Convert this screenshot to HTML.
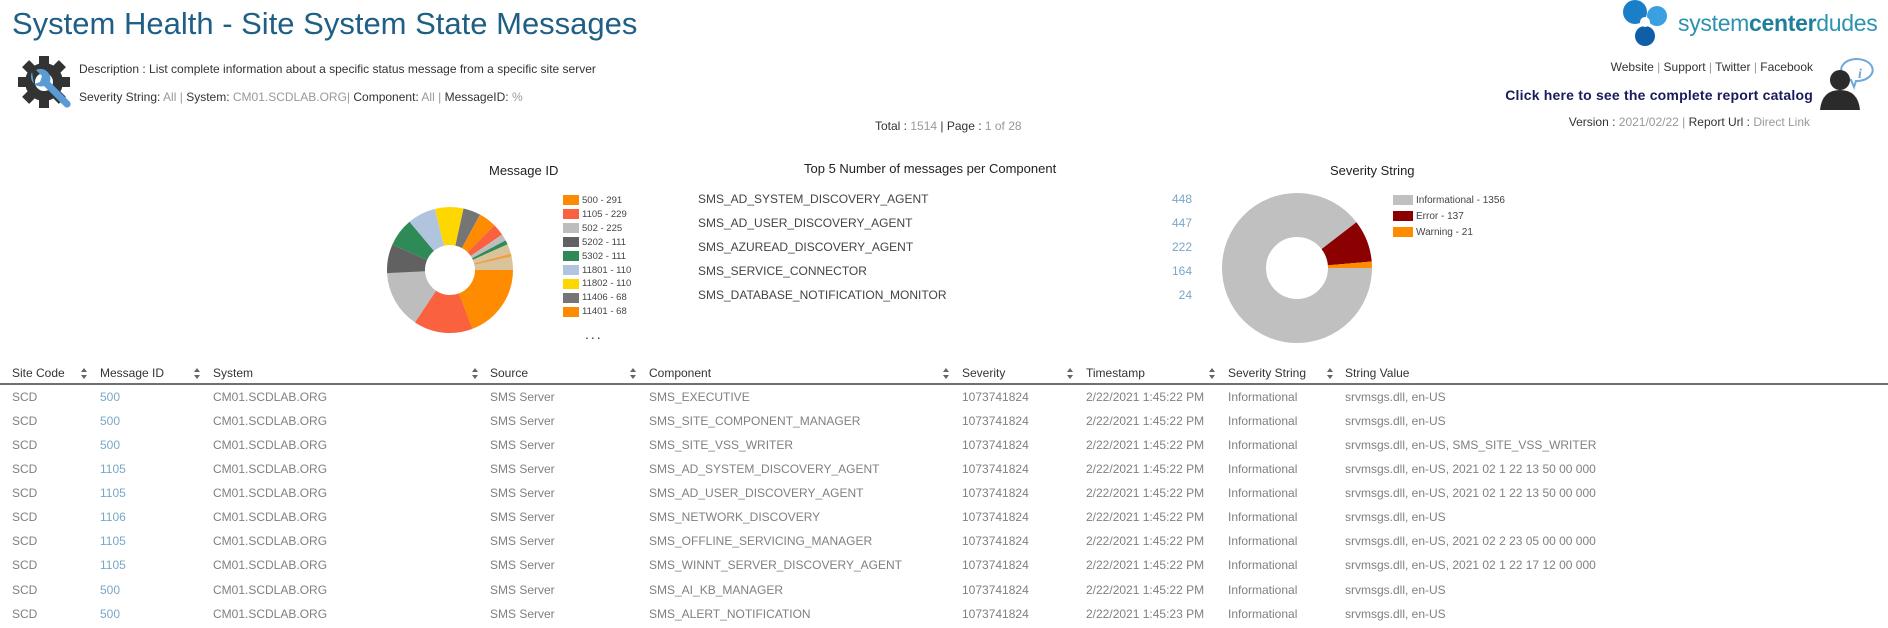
<!DOCTYPE html>
<html><head><meta charset="utf-8"><style>
*{margin:0;padding:0;box-sizing:border-box}
body{width:1888px;height:628px;background:#fff;font-family:"Liberation Sans",sans-serif;color:#444;position:relative;overflow:hidden;font-size:12px}
.a{position:absolute;white-space:nowrap}
.g{color:#999}
.lk{color:#7aa7c7}
.hd{color:#333;font-size:12px}
.si{position:absolute;width:7px;height:11px}
.si:before,.si:after{content:"";position:absolute;left:0;border-left:3.5px solid transparent;border-right:3.5px solid transparent}
.si:before{top:0;border-bottom:4px solid #666}
.si:after{bottom:0;border-top:4px solid #666}
.leg{position:absolute;font-size:9.5px;color:#444}
.leg i{display:inline-block;width:16px;height:10px;vertical-align:middle;margin-right:3px}
</style></head><body>
<div class="a" style="left:12px;top:6px;font-size:31px;color:#1f5f86">System Health - Site System State Messages</div>

<svg class="a" style="left:18px;top:56px" width="56" height="54" viewBox="0 0 56 54">
<g fill="#333" transform="translate(26,26)">
<circle r="19"/>
<g id="t"><rect x="-5" y="-26" width="10" height="10"/></g>
<use href="#t" transform="rotate(45)"/><use href="#t" transform="rotate(90)"/><use href="#t" transform="rotate(135)"/><use href="#t" transform="rotate(180)"/><use href="#t" transform="rotate(225)"/><use href="#t" transform="rotate(270)"/><use href="#t" transform="rotate(315)"/>
<circle r="9" fill="#fff"/>
</g>
<path d="M14 16 a10 10 0 0 0 12 14 L46 50 a3 3 0 0 0 6 -4 L32 26 a10 10 0 0 0 -14 -12 l6 6 -2 6 -6 2z" fill="#5b9bd5"/>
</svg>
<div class="a" style="left:79px;top:62px;font-size:12px;color:#333">Description : List complete information about a specific status message from a specific site server</div>
<div class="a" style="left:79px;top:90px;font-size:12px;color:#333">Severity String: <span class="g">All</span> <span class="g">|</span> System: <span class="g">CM01.SCDLAB.ORG</span><span class="g">|</span> Component: <span class="g">All</span> <span class="g">|</span> MessageID: <span class="g">%</span></div>
<div class="a" style="left:875px;top:119px;font-size:12px;color:#333">Total : <span class="g">1514</span> | Page : <span class="g">1 of 28</span></div>

<svg class="a" style="left:1617px;top:0" width="60" height="48">
<circle cx="18" cy="12" r="12" fill="#1b7fc8"/><circle cx="40" cy="16" r="10" fill="#3aa0e0"/><circle cx="28" cy="36" r="10" fill="#0e5fa8"/><circle cx="28" cy="22" r="5" fill="#fff"/>
</svg>
<div class="a" style="left:1678px;top:10px;font-size:23px;color:#2a93b0;letter-spacing:-0.3px">system<b style="color:#1d7f9c">center</b>dudes</div>
<div class="a" style="right:75px;top:60px;font-size:12px;color:#333">Website <span class="g">|</span> Support <span class="g">|</span> Twitter <span class="g">|</span> Facebook</div>
<div class="a" style="right:75px;top:87px;font-size:14px;color:#1a1a5e;font-weight:bold;letter-spacing:0.2px">Click here to see the complete report catalog</div>
<div class="a" style="right:78px;top:115px;font-size:12px;color:#333">Version : <span class="g">2021/02/22</span> <span class="g">|</span> Report Url : <span class="g">Direct Link</span></div>
<svg class="a" style="left:1820px;top:56px" width="58" height="56">
<path d="M30 4 a16 11 0 1 1 6 21 l-2 6 -3 -7 a16 11 0 0 1 -1 -20z" fill="none" stroke="#6fa8d8" stroke-width="2"/>
<text x="38" y="22" font-size="14" font-style="italic" font-weight="bold" fill="#6fa8d8" font-family="Liberation Serif">i</text>
<circle cx="20" cy="24" r="10" fill="#2b2b2b"/><path d="M0 54 q2 -20 20 -20 q18 0 20 20z" fill="#2b2b2b"/>
</svg>

<div class="a" style="left:489px;top:163px;font-size:13px;color:#222">Message ID</div>
<svg class="a" style="left:380px;top:200px" width="140" height="140" viewBox="0 0 140 140">
<g transform="translate(70,70)" fill="none" stroke-width="38">
<circle r="44" stroke="#ff8c00" stroke-dasharray="53.1 300" transform="rotate(0)"/>
<circle r="44" stroke="#f9613f" stroke-dasharray="41.9 300" transform="rotate(69.2)"/>
<circle r="44" stroke="#bdbdbd" stroke-dasharray="41.1 300" transform="rotate(123.7)"/>
<circle r="44" stroke="#616161" stroke-dasharray="20.3 300" transform="rotate(177.2)"/>
<circle r="44" stroke="#2e8b57" stroke-dasharray="20.3 300" transform="rotate(203.6)"/>
<circle r="44" stroke="#b0c4de" stroke-dasharray="20.1 300" transform="rotate(230)"/>
<circle r="44" stroke="#ffd700" stroke-dasharray="20.1 300" transform="rotate(256.2)"/>
<circle r="44" stroke="#757575" stroke-dasharray="12.4 300" transform="rotate(282.4)"/>
<circle r="44" stroke="#ff8c00" stroke-dasharray="12.4 300" transform="rotate(298.6)"/>
<circle r="44" stroke="#f9613f" stroke-dasharray="8.5 300" transform="rotate(314.8)"/>
<circle r="44" stroke="#bdbdbd" stroke-dasharray="4.6 300" transform="rotate(326)"/>
<circle r="44" stroke="#2e8b57" stroke-dasharray="3.1 300" transform="rotate(332)"/>
<circle r="44" stroke="#d8c39a" stroke-dasharray="18.4 300" transform="rotate(336)"/>
<circle r="44" stroke="#f0a040" stroke-dasharray="2 300" transform="rotate(345)"/>
</g></svg>
<div class="leg" style="left:563px;top:194px;line-height:13.9px">
<div><i style="background:#ff8c00"></i>500 - 291</div>
<div><i style="background:#f9613f"></i>1105 - 229</div>
<div><i style="background:#bdbdbd"></i>502 - 225</div>
<div><i style="background:#616161"></i>5202 - 111</div>
<div><i style="background:#2e8b57"></i>5302 - 111</div>
<div><i style="background:#b0c4de"></i>11801 - 110</div>
<div><i style="background:#ffd700"></i>11802 - 110</div>
<div><i style="background:#757575"></i>11406 - 68</div>
<div><i style="background:#ff8c00"></i>11401 - 68</div>
</div>
<div class="a" style="left:585px;top:326px;font-size:14px;color:#333;letter-spacing:2px">...</div>

<div class="a" style="left:804px;top:161px;font-size:13px;color:#222">Top 5 Number of messages per Component</div>
<div class="a" style="left:698px;top:187px;font-size:12px;color:#444;line-height:24px">SMS_AD_SYSTEM_DISCOVERY_AGENT<br>SMS_AD_USER_DISCOVERY_AGENT<br>SMS_AZUREAD_DISCOVERY_AGENT<br>SMS_SERVICE_CONNECTOR<br>SMS_DATABASE_NOTIFICATION_MONITOR</div>
<div class="a lk" style="right:696px;top:187px;font-size:12px;line-height:24px;text-align:right">448<br>447<br>222<br>164<br>24</div>

<div class="a" style="left:1330px;top:163px;font-size:13px;color:#222">Severity String</div>
<svg class="a" style="left:1220px;top:191px" width="154" height="154" viewBox="0 0 154 154">
<g transform="translate(77,77)" fill="none" stroke-width="44">
<circle r="53" stroke="#c0c0c0" stroke-dasharray="298.2 400"/>
<circle r="53" stroke="#8b0000" stroke-dasharray="30.2 400" transform="rotate(322.4)"/>
<circle r="53" stroke="#ff8c00" stroke-dasharray="4.7 400" transform="rotate(355)"/>
</g></svg>
<div class="leg" style="left:1393px;top:193px;line-height:15.8px;font-size:10px">
<div><i style="background:#c0c0c0;width:20px"></i>Informational - 1356</div>
<div><i style="background:#8b0000;width:20px"></i>Error - 137</div>
<div><i style="background:#ff8c00;width:20px"></i>Warning - 21</div>
</div>

<div class="a hd" style="left:12px;top:366px">Site Code</div><div class="si" style="left:81px;top:368px"></div>
<div class="a hd" style="left:100px;top:366px">Message ID</div><div class="si" style="left:194px;top:368px"></div>
<div class="a hd" style="left:213px;top:366px">System</div><div class="si" style="left:472px;top:368px"></div>
<div class="a hd" style="left:490px;top:366px">Source</div><div class="si" style="left:630px;top:368px"></div>
<div class="a hd" style="left:649px;top:366px">Component</div><div class="si" style="left:943px;top:368px"></div>
<div class="a hd" style="left:962px;top:366px">Severity</div><div class="si" style="left:1067px;top:368px"></div>
<div class="a hd" style="left:1086px;top:366px">Timestamp</div><div class="si" style="left:1209px;top:368px"></div>
<div class="a hd" style="left:1228px;top:366px">Severity String</div><div class="si" style="left:1327px;top:368px"></div>
<div class="a hd" style="left:1345px;top:366px">String Value</div>
<div class="a" style="left:0;top:383px;width:1888px;height:2px;background:#6b7378"></div>

<div class="a" style="left:0;top:385px;width:1888px;line-height:24.07px;color:#808080;font-size:12px">
<div class="a" style="left:12px">SCD<br>SCD<br>SCD<br>SCD<br>SCD<br>SCD<br>SCD<br>SCD<br>SCD<br>SCD</div>
<div class="a lk" style="left:100px">500<br>500<br>500<br>1105<br>1105<br>1106<br>1105<br>1105<br>500<br>500</div>
<div class="a" style="left:213px">CM01.SCDLAB.ORG<br>CM01.SCDLAB.ORG<br>CM01.SCDLAB.ORG<br>CM01.SCDLAB.ORG<br>CM01.SCDLAB.ORG<br>CM01.SCDLAB.ORG<br>CM01.SCDLAB.ORG<br>CM01.SCDLAB.ORG<br>CM01.SCDLAB.ORG<br>CM01.SCDLAB.ORG</div>
<div class="a" style="left:490px">SMS Server<br>SMS Server<br>SMS Server<br>SMS Server<br>SMS Server<br>SMS Server<br>SMS Server<br>SMS Server<br>SMS Server<br>SMS Server</div>
<div class="a" style="left:649px">SMS_EXECUTIVE<br>SMS_SITE_COMPONENT_MANAGER<br>SMS_SITE_VSS_WRITER<br>SMS_AD_SYSTEM_DISCOVERY_AGENT<br>SMS_AD_USER_DISCOVERY_AGENT<br>SMS_NETWORK_DISCOVERY<br>SMS_OFFLINE_SERVICING_MANAGER<br>SMS_WINNT_SERVER_DISCOVERY_AGENT<br>SMS_AI_KB_MANAGER<br>SMS_ALERT_NOTIFICATION</div>
<div class="a" style="left:962px">1073741824<br>1073741824<br>1073741824<br>1073741824<br>1073741824<br>1073741824<br>1073741824<br>1073741824<br>1073741824<br>1073741824</div>
<div class="a" style="left:1086px">2/22/2021 1:45:22 PM<br>2/22/2021 1:45:22 PM<br>2/22/2021 1:45:22 PM<br>2/22/2021 1:45:22 PM<br>2/22/2021 1:45:22 PM<br>2/22/2021 1:45:22 PM<br>2/22/2021 1:45:22 PM<br>2/22/2021 1:45:22 PM<br>2/22/2021 1:45:22 PM<br>2/22/2021 1:45:23 PM</div>
<div class="a" style="left:1228px">Informational<br>Informational<br>Informational<br>Informational<br>Informational<br>Informational<br>Informational<br>Informational<br>Informational<br>Informational</div>
<div class="a" style="left:1345px">srvmsgs.dll, en-US<br>srvmsgs.dll, en-US<br>srvmsgs.dll, en-US, SMS_SITE_VSS_WRITER<br>srvmsgs.dll, en-US, 2021 02 1 22 13 50 00 000<br>srvmsgs.dll, en-US, 2021 02 1 22 13 50 00 000<br>srvmsgs.dll, en-US<br>srvmsgs.dll, en-US, 2021 02 2 23 05 00 00 000<br>srvmsgs.dll, en-US, 2021 02 1 22 17 12 00 000<br>srvmsgs.dll, en-US<br>srvmsgs.dll, en-US</div>
</div>
</body></html>
